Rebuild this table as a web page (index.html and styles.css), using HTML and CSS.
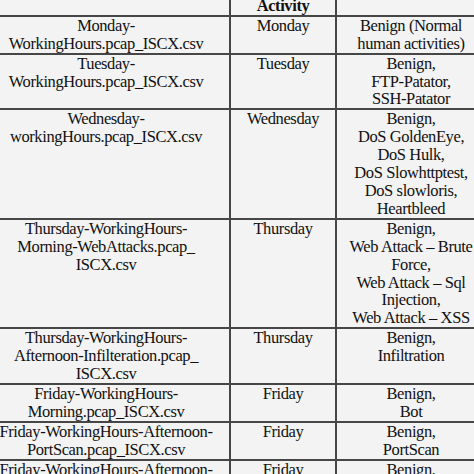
FILE: index.html
```html
<!DOCTYPE html>
<html>
<head>
<meta charset="utf-8">
<link rel="stylesheet" href="styles.css">
</head>
<body>
<div class="frame">
<table class="data">
  <colgroup>
    <col class="c1"><col class="c2"><col class="c3">
  </colgroup>
  <thead>
    <tr class="head">
      <th class="mid">File Name</th>
      <th>Day<br>Activity</th>
      <th class="mid">Attacks Found</th>
    </tr>
  </thead>
  <tbody>
    <tr>
      <td>Monday-<br>WorkingHours.pcap_ISCX.csv</td>
      <td>Monday</td>
      <td>Benign (Normal<br>human activities)</td>
    </tr>
    <tr>
      <td>Tuesday-<br>WorkingHours.pcap_ISCX.csv</td>
      <td>Tuesday</td>
      <td>Benign,<br>FTP-Patator,<br>SSH-Patator</td>
    </tr>
    <tr>
      <td>Wednesday-<br>workingHours.pcap_ISCX.csv</td>
      <td>Wednesday</td>
      <td>Benign,<br>DoS GoldenEye,<br>DoS Hulk,<br>DoS Slowhttptest,<br>DoS slowloris,<br>Heartbleed</td>
    </tr>
    <tr>
      <td>Thursday-WorkingHours-<br>Morning-WebAttacks.pcap_<br>ISCX.csv</td>
      <td>Thursday</td>
      <td>Benign,<br>Web Attack – Brute<br>Force,<br>Web Attack – Sql<br>Injection,<br>Web Attack – XSS</td>
    </tr>
    <tr>
      <td>Thursday-WorkingHours-<br>Afternoon-Infilteration.pcap_<br>ISCX.csv</td>
      <td>Thursday</td>
      <td>Benign,<br>Infiltration</td>
    </tr>
    <tr>
      <td>Friday-WorkingHours-<br>Morning.pcap_ISCX.csv</td>
      <td>Friday</td>
      <td>Benign,<br>Bot</td>
    </tr>
    <tr>
      <td>Friday-WorkingHours-Afternoon-<br>PortScan.pcap_ISCX.csv</td>
      <td>Friday</td>
      <td>Benign,<br>PortScan</td>
    </tr>
    <tr>
      <td>Friday-WorkingHours-Afternoon-<br>DDos.pcap_ISCX.csv</td>
      <td>Friday</td>
      <td>Benign,<br>DDoS</td>
    </tr>
  </tbody>
</table>
</div>
</body>
</html>
```

FILE: styles.css
```css
html, body {
  margin: 0;
  padding: 0;
  background: #f3f3f3;
}
body {
  width: 474px;
  height: 474px;
  overflow: hidden;
}
.frame {
  margin-top: -23px;
  margin-left: -19px;
}
.data {
  border-collapse: collapse;
  table-layout: fixed;
  width: 504px;
  font-family: "Liberation Serif", "Times New Roman", serif;
  font-size: 16.5px;
  letter-spacing: -0.4px;
  line-height: 17.9px;
  color: #111;
}
.c1 { width: 248px; }
.c2 { width: 106px; }
.c3 { width: 150px; }
.data th,
.data td {
  border: 2px solid #464646;
  padding: 0;
  text-align: center;
  vertical-align: top;
  white-space: nowrap;
}
.data th {
  font-weight: bold;
}
.data th.mid {
  vertical-align: middle;
  padding-bottom: 5px;
}
```
